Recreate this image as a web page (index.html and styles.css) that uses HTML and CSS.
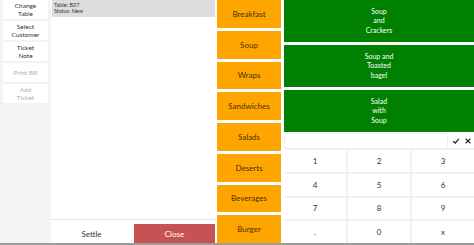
FILE: index.html
```html
<!DOCTYPE html>
<html>
<head>
<meta charset="utf-8">
<link rel="stylesheet" href="styles.css">
</head>
<body>
<div class="screen">
  <div class="app">
    <div class="side">
      <div class="sbtn">Change<br>Table</div>
      <div class="sbtn">Select<br>Customer</div>
      <div class="sbtn">Ticket<br>Note</div>
      <div class="sbtn dis">Print Bill</div>
      <div class="sbtn dis">Add<br>Ticket</div>
    </div>
    <div class="ticket">
      <div class="thead">Table: B27<br>Status: New</div>
      <div class="tbody"></div>
      <div class="tfoot">
        <div class="fbtn settle">Settle</div>
        <div class="fbtn close">Close</div>
      </div>
    </div>
    <div class="cats">
      <div class="cat">Breakfast</div>
      <div class="cat">Soup</div>
      <div class="cat">Wraps</div>
      <div class="cat">Sandwiches</div>
      <div class="cat">Salads</div>
      <div class="cat">Deserts</div>
      <div class="cat">Beverages</div>
      <div class="cat">Burger</div>
    </div>
    <div class="prods">
      <div class="prod">Soup<br>and<br>Crackers</div>
      <div class="prod">Soup and<br>Toasted<br>bagel</div>
      <div class="prod">Salad<br>with<br>Soup</div>
      <div class="entry">
        <div class="field"></div>
        <svg class="ico" viewBox="0 0 10 10" width="8" height="8"><path d="M1.5 5.2 L4 7.6 L8.6 2.4" fill="none" stroke="#222" stroke-width="1.6"/></svg>
        <svg class="ico" viewBox="0 0 10 10" width="8" height="8"><path d="M2 2 L8 8 M8 2 L2 8" fill="none" stroke="#222" stroke-width="1.6"/></svg>
      </div>
      <div class="pad">
        <div class="key">1</div><div class="key">2</div><div class="key">3</div>
        <div class="key">4</div><div class="key">5</div><div class="key">6</div>
        <div class="key">7</div><div class="key">8</div><div class="key">9</div>
        <div class="key">.</div><div class="key">0</div><div class="key">x</div>
      </div>
    </div>
  </div>
  <div class="bar"></div>
</div>
</body>
</html>
```
FILE: styles.css
```css
html, body {
  margin: 0;
  padding: 0;
  background: #ffffff;
}
body {
  font-family: Lato, "Open Sans", "DejaVu Sans", sans-serif;
  color: #222;
}
.screen {
  width: 474px;
  height: 245px;
  display: flex;
  flex-direction: column;
  overflow: hidden;
}
.app {
  height: 243px;
  display: flex;
}
.bar {
  height: 2px;
  background: #9c9c9c;
}
.side {
  width: 45px;
  padding: 0 3px;
  background: #f3f3f3;
  display: flex;
  flex-direction: column;
  gap: 2px;
}
.sbtn {
  height: 19px;
  background: #ffffff;
  display: flex;
  align-items: center;
  justify-content: center;
  text-align: center;
  font-size: 6.5px;
  line-height: 7.5px;
  color: #333;
}
.sbtn.dis {
  color: #b0b0b0;
}
.ticket {
  width: 163px;
  padding: 0 2px 0 1px;
  background: #fff;
  display: flex;
  flex-direction: column;
}
.thead {
  height: 17px;
  background: #dddddd;
  font-size: 5.5px;
  line-height: 6px;
  padding: 2px 0 0 2px;
  box-sizing: border-box;
  color: #333;
}
.tbody {
  flex: 1;
  border-bottom: 1px solid #e6e6e6;
}
.tfoot {
  height: 23px;
  padding-top: 4px;
  box-sizing: border-box;
  display: flex;
  gap: 2px;
  margin-left: -1px;
}
.fbtn {
  flex: 1;
  display: flex;
  align-items: center;
  justify-content: center;
  font-size: 8px;
}
.settle {
  background: #fff;
  color: #333;
}
.close {
  background: #c55353;
  color: #fff;
}
.cats {
  width: 64px;
  display: flex;
  flex-direction: column;
  gap: 3px;
  margin-right: 3px;
}
.cat {
  flex: 1;
  background: #ffa500;
  display: flex;
  align-items: center;
  justify-content: center;
  font-size: 8px;
  color: #4a3000;
}
.prods {
  flex: 1;
  display: flex;
  flex-direction: column;
}
.prod {
  height: 42px;
  margin-bottom: 3px;
  background: #008000;
  color: #fff;
  display: flex;
  align-items: center;
  justify-content: center;
  text-align: center;
  font-size: 7px;
  line-height: 9.5px;
}
.entry {
  height: 15px;
  margin-top: -2px;
  display: flex;
  align-items: center;
  gap: 4px;
  padding-right: 2px;
}
.field {
  flex: 1;
  height: 14px;
  background: #fff;
  border: 1px solid #f0f0f0;
}
.pad {
  flex: 1;
  display: grid;
  grid-template-columns: 1fr 1fr 1fr;
  grid-template-rows: repeat(4, 1fr);
  gap: 2px;
  background: #f1f1f1;
  padding-top: 2px;
}
.key {
  background: #fff;
  display: flex;
  align-items: center;
  justify-content: center;
  font-size: 8px;
  color: #333;
}
```
